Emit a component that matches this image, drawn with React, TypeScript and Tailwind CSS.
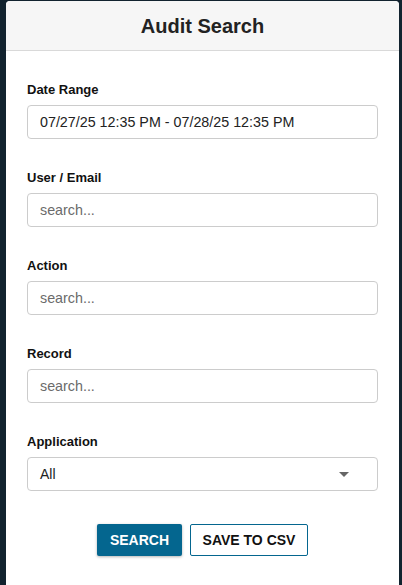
import React from 'react';

const fields = [
  { label: 'Date Range', value: '07/27/25 12:35 PM - 07/28/25 12:35 PM' },
  { label: 'User / Email', placeholder: 'search...' },
  { label: 'Action', placeholder: 'search...' },
  { label: 'Record', placeholder: 'search...' },
];

export default function App() {
  return (
    <div className="h-[585px] w-[402px] overflow-hidden bg-[#12232f] pt-px pl-[6px] pr-[3px] font-['Liberation_Sans',Arial,sans-serif]">
      <div className="h-full rounded-t-[4px] bg-white">
        {/* Header */}
        <div className="flex h-[50px] items-center justify-center rounded-t-[4px] border-b border-[#d9d9d9] bg-[#f6f6f6]">
          <h1 className="text-[20px] font-bold text-[#222]">Audit Search</h1>
        </div>

        {/* Form */}
        <div className="px-[21px] pt-[31px]">
          {fields.map((f) => (
            <div key={f.label} className="mb-[31px]">
              <label className="block h-[16px] text-[13px] leading-[16px] font-bold text-[#111]">{f.label}</label>
              <input
                readOnly
                defaultValue={f.value}
                placeholder={f.placeholder}
                className="mt-[7px] block h-[34px] w-full rounded-[4px] border border-[#ccc] bg-white px-[12px] text-[14.3px] text-[#222] outline-none placeholder:text-[#6b6b6b]"
              />
            </div>
          ))}

          <div>
            <label className="block h-[16px] text-[13px] leading-[16px] font-bold text-[#111]">Application</label>
            <div className="mt-[7px] flex h-[34px] w-full items-center justify-between rounded-[4px] border border-[#ccc] bg-white pr-[28px] pl-[12px]">
              <span className="text-[14px] text-[#222]">All</span>
              <svg width="10" height="5" viewBox="0 0 10 5">
                <path d="M0 0h10L5 5z" fill="#666" />
              </svg>
            </div>
          </div>

          <div className="mt-[33px] flex justify-center gap-[8px]">
            <button className="h-[32px] w-[85px] rounded-[2px] bg-[#04668f] text-[14px] font-bold text-white shadow-[0_1px_3px_rgba(0,0,0,0.3)]">
              SEARCH
            </button>
            <button className="h-[32px] w-[118px] rounded-[2px] border border-[#04668f] bg-white text-[14px] font-bold text-[#111]">
              SAVE TO CSV
            </button>
          </div>
        </div>
      </div>
    </div>
  );
}
